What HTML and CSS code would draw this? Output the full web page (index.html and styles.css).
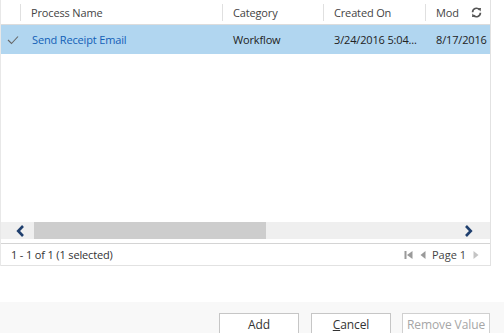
FILE: index.html
```html
<!DOCTYPE html>
<html>
<head>
<meta charset="utf-8">
<link rel="stylesheet" href="styles.css">
</head>
<body>
<div class="grid">
  <div class="header">
    <div class="hcell c-check"></div>
    <div class="hcell c-name"><span class="lbl">Process Name</span></div>
    <div class="hcell c-cat"><span class="lbl">Category</span></div>
    <div class="hcell c-created"><span class="lbl">Created On</span></div>
    <div class="hcell c-mod"><span class="lbl">Mod</span>
      <svg class="refresh" width="11" height="11" viewBox="0 0 11 11">
        <path d="M1.6 5.2 A3.9 3.9 0 0 1 8.4 2.6" fill="none" stroke="#555" stroke-width="1.7"/>
        <path d="M6.6 1.2 L10 1 L9.6 4.4 Z" fill="#555"/>
        <path d="M9.4 5.8 A3.9 3.9 0 0 1 2.6 8.4" fill="none" stroke="#555" stroke-width="1.7"/>
        <path d="M4.4 9.8 L1 10 L1.4 6.6 Z" fill="#555"/>
      </svg>
    </div>
  </div>
  <div class="rows">
    <div class="row selected">
      <div class="cell c-check">
        <svg width="12" height="10" viewBox="0 0 12 10"><path d="M1 5 L4.5 8.5 L11 1.5" fill="none" stroke="#666" stroke-width="1.1"/></svg>
      </div>
      <div class="cell c-name link">Send Receipt Email</div>
      <div class="cell c-cat">Workflow</div>
      <div class="cell c-created">3/24/2016 5:04...</div>
      <div class="cell c-mod">8/17/2016</div>
    </div>
  </div>
  <div class="hscroll">
    <div class="arrow left">
      <svg width="9" height="12" viewBox="0 0 9 12"><path d="M7 1 L2.2 6 L7 11" fill="none" stroke="#1f3f6e" stroke-width="2.6"/></svg>
    </div>
    <div class="thumb"></div>
    <div class="track"></div>
    <div class="arrow right">
      <svg width="9" height="12" viewBox="0 0 9 12"><path d="M2 1 L6.8 6 L2 11" fill="none" stroke="#1f3f6e" stroke-width="2.6"/></svg>
    </div>
  </div>
  <div class="status">
    <span class="count">1 - 1 of 1 (1 selected)</span>
    <div class="pager">
      <svg width="9" height="10" viewBox="0 0 9 10"><rect x="0.5" y="1" width="2" height="8" fill="#9a9a9a"/><path d="M8.5 1 L3 5 L8.5 9 Z" fill="#9a9a9a"/></svg>
      <svg class="prev" width="6" height="10" viewBox="0 0 6 10"><path d="M5.5 1 L0.5 5 L5.5 9 Z" fill="#9a9a9a"/></svg>
      <span class="page">Page 1</span>
      <svg class="next" width="6" height="10" viewBox="0 0 6 10"><path d="M0.5 1 L5.5 5 L0.5 9 Z" fill="#c4c4c4"/></svg>
    </div>
  </div>
</div>
<div class="footer">
  <button class="btn">Add</button>
  <button class="btn"><u>C</u>ancel</button>
  <button class="btn disabled">Remove Value</button>
</div>
</body>
</html>
```
FILE: styles.css
```css
html, body {
  margin: 0;
  padding: 0;
  background: #fff;
  font-family: "Open Sans", "Noto Sans", sans-serif;
  font-size: 11px;
  letter-spacing: -0.15px;
  color: #333;
  width: 504px;
  height: 333px;
  overflow: hidden;
}
.grid {
  width: 489px;
  border-left: 1px solid #e8e8e8;
  border-right: 1px solid #e2e2e2;
  box-sizing: content-box;
}
.header {
  display: flex;
  height: 24px;
  border-bottom: 1px solid #dcdcdc;
}
.hcell {
  display: flex;
  align-items: center;
  box-sizing: border-box;
}
.lbl {
  display: block;
  border-left: 1px solid #e0e0e0;
  height: 17px;
  line-height: 17px;
  padding-left: 10px;
  color: #444;
}
.c-check { width: 19px; flex: none; }
.c-name { width: 202px; flex: none; }
.c-cat { width: 101px; flex: none; }
.c-created { width: 102px; flex: none; }
.c-mod { flex: 1; }
.hcell.c-mod { justify-content: space-between; padding-right: 8px; }
.refresh { display: block; }
.rows {
  height: 197px;
}
.row {
  display: flex;
  height: 29px;
  align-items: center;
}
.row.selected { background: #b1d6f0; }
.cell {
  box-sizing: border-box;
  padding-left: 11px;
  white-space: nowrap;
  color: #222;
}
.cell.c-check { padding-left: 6px; display: flex; align-items: center; }
.cell.c-check svg { display: block; }
.cell.c-name { padding-left: 12px; }
.link { color: #1160b7; }
.hscroll {
  display: flex;
  height: 17px;
  background: #efefef;
  margin-bottom: 4px;
}
.arrow {
  display: flex;
  align-items: center;
}
.arrow svg { display: block; }
.arrow.left { width: 33px; padding-left: 15px; box-sizing: border-box; }
.arrow.right { width: 40px; padding-left: 14px; box-sizing: border-box; }
.thumb { width: 232px; background: #cdcdcd; }
.track { flex: 1; }
.status {
  display: flex;
  align-items: center;
  justify-content: space-between;
  height: 21px;
  border-top: 1px solid #d4d4d4;
  border-bottom: 1px solid #e2e2e2;
  padding: 0 11px 0 10px;
  color: #333;
}
.pager {
  display: flex;
  align-items: center;
}
.pager svg { display: block; }
.pager .prev { margin-left: 7px; }
.pager .page { margin-left: 6px; margin-right: 7px; color: #444; letter-spacing: 0; }
.footer {
  margin-top: 36px;
  height: 31px;
  background: #f8f8f8;
  display: flex;
  justify-content: flex-end;
  align-items: flex-start;
  padding: 11px 14px 0 0;
  box-sizing: border-box;
  gap: 12px;
}
.btn {
  font-family: inherit;
  font-size: 12px;
  letter-spacing: -0.1px;
  width: 80px;
  height: 24px;
  background: #fff;
  border: 1px solid #c6c6c6;
  color: #333;
  padding: 0;
  margin: 0;
  line-height: 22px;
}
.btn u { text-decoration: underline; }
.btn.disabled {
  width: 88px;
  color: #a6a6a6;
  border-color: #d0d0d0;
  margin-left: -1px;
}
```
